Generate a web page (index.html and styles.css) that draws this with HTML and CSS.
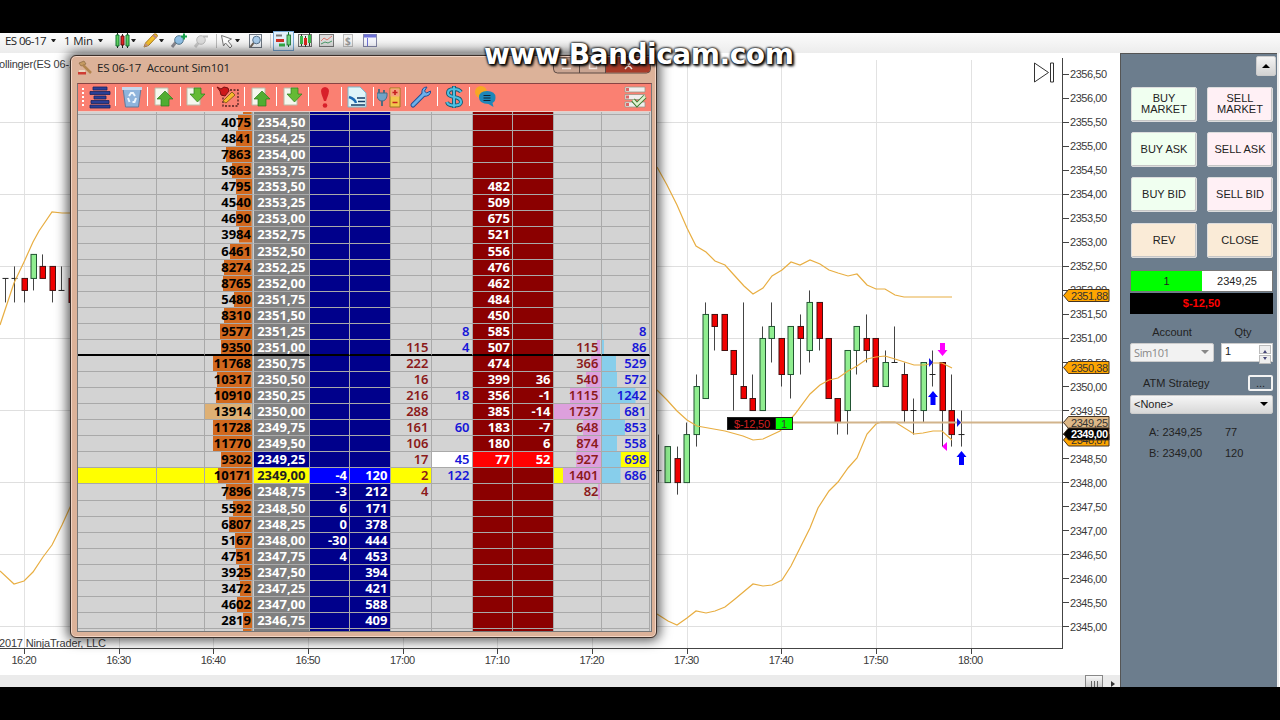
FILE: index.html
```html
<!DOCTYPE html>
<html>
<head>
  <meta charset="utf-8">
  <title>ES 06-17</title>
  <link rel="stylesheet" href="styles.css">
</head>
<body>

<div class="app">
  <!-- Top toolbar -->
  <div class="toolbar">
    <span class="instrument">ES 06-17</span>
    <i class="caret"></i>
    <span class="interval">1 Min</span>
    <i class="caret"></i>
    <svg class="icon" width="25" height="20" viewBox="107 31 25 20">
      <path d="M118.500 33v15M123.500 34v14M128.500 33v15" stroke="#222"/>
      <path d="M117 35h3v11h-3z" fill="#5fd35f" stroke="#173"/><path d="M122 36h3v9h-3z" fill="#e22" stroke="#611"/><path d="M127 35h3v11h-3z" fill="#5fd35f" stroke="#173"/>
    </svg>
    <i class="caret tight"></i>
    <svg class="icon" width="20" height="20" viewBox="139 31 20 20">
      <path d="M144 47l1.500-4 8.500-9q3-1 3.500 2l-9 9.500z" fill="#f4c02c" stroke="#a97a1c"/><path d="M153 35l3.500 3" stroke="#b88" stroke-width="2"/><path d="M144 47l1.500-4 3 2.500z" fill="#c98"/>
    </svg>
    <i class="caret tight"></i>
    <svg class="icon" width="24" height="20" viewBox="166 31 24 20">
      <path d="M176 42l-4 5" stroke="#8c8c94" stroke-width="3"/><circle cx="179" cy="40" r="4.300" fill="#8fc0e6" stroke="#54788f"/><path d="M181 36.500h6M184 33.500v6" stroke="#16a04a" stroke-width="2"/>
    </svg>
    <svg class="icon" width="28" height="20" viewBox="190 31 28 20">
      <path d="M199 42l-4 5" stroke="#c8c8c8" stroke-width="3"/><circle cx="201" cy="40" r="4.300" fill="#ddd" stroke="#bbb"/><path d="M203 36.500h5" stroke="#bbb" stroke-width="2"/><path d="M216.500 34v14" stroke="#bbb"/>
    </svg>
    <svg class="icon" width="17" height="20" viewBox="218 31 17 20">
      <path d="M221.500 35.500l10 3.500-3.500 2 4 5-2 2-4.500-5-2 3z" fill="#fff" stroke="#777"/>
    </svg>
    <i class="caret tight"></i>
    <svg class="icon" width="29" height="20" viewBox="243 31 29 20">
      <rect x="249.500" y="34.500" width="12" height="13" fill="#eef2f7" stroke="#6e7680"/><circle cx="256.500" cy="40" r="3.800" fill="#a8cbea" stroke="#57728c"/><path d="M253.500 43l-3 4" stroke="#6d6257" stroke-width="2"/><path d="M270.500 34v14" stroke="#ccc"/>
    </svg>
    <svg class="icon" width="23" height="20" viewBox="272 31 23 20">
      <rect x="273.500" y="31.500" width="20" height="19" fill="#e2f0fb" stroke="#77a8d6"/><path d="M276 35.500h6" stroke="#777" stroke-width="2"/><path d="M276 40.500h8" stroke="#cf3125" stroke-width="3"/><path d="M279 45h6" stroke="#34b04a" stroke-width="3"/><path d="M288.500 32v15" stroke="#176b29"/><rect x="287" y="35" width="3.500" height="10" fill="#6fd67c" stroke="#176b29" stroke-width=".8"/>
    </svg>
    <svg class="icon" width="22" height="20" viewBox="295 31 22 20">
      <rect x="298.500" y="34.500" width="13" height="12" fill="#ecece8" stroke="#737373"/><path d="M301.500 34v12M305.500 36v11M309.500 33v13" stroke="#333"/><path d="M300 36h3v8h-3zM308 35h3v8h-3z" fill="#3db84b"/><path d="M304 38h3v7h-3z" fill="#d9261f"/>
    </svg>
    <svg class="icon" width="24" height="20" viewBox="317 31 24 20">
      <rect x="319.500" y="34.500" width="14" height="12" fill="#ddd" stroke="#777"/><path d="M321 41l3-3 3 2 5-4" fill="none" stroke="#e07a70"/><path d="M321 44l4-2 3 1 4-2" fill="none" stroke="#4a9a68"/>
    </svg>
    <svg class="icon" width="19" height="20" viewBox="341 31 19 20">
      <rect x="343.500" y="34.500" width="9" height="12" fill="#f1f1f1" stroke="#bbb"/><text x="345" y="44.500" font-size="10" font-weight="bold" fill="#999">$</text>
    </svg>
    <svg class="icon" width="20" height="20" viewBox="360 31 20 20">
      <rect x="363.500" y="34.500" width="13" height="12" fill="#f5f6fc" stroke="#8487a8"/><path d="M364 36h12" stroke="#6e72d8" stroke-width="3"/><path d="M367.500 38v8" stroke="#6e72d8"/>
    </svg>
  </div>

  <div class="workspace">
    <div class="chart-side">
      <svg id="chart" class="chart" width="1120" height="622" viewBox="0 53 1120 622"></svg>
      <div class="scroll-strip"><span class="thumb"><i></i><i></i><i></i></span><i class="scroll-arrow"></i></div>
    </div>

    <!-- Chart trader panel -->
    <div class="trader">
      <div class="collapse"><button class="up-btn"><i></i></button></div>
      <div class="orders">
        <button class="buy">BUY<br>MARKET</button>
        <button class="sell">SELL<br>MARKET</button>
        <button class="buy">BUY ASK</button>
        <button class="sell">SELL ASK</button>
        <button class="buy">BUY BID</button>
        <button class="sell">SELL BID</button>
        <button class="flat">REV</button>
        <button class="flat">CLOSE</button>
      </div>
      <div class="position"><span class="size">1</span><span class="entry">2349,25</span></div>
      <div class="pnl">$-12,50</div>
      <div class="labels"><span class="account-label">Account</span><span class="qty-label">Qty</span></div>
      <div class="fields">
        <div class="account">Sim101<i class="down"></i></div>
        <div class="qty">1<span class="spin"><i class="up"></i><i class="down"></i></span></div>
      </div>
      <div class="atm"><span>ATM Strategy</span><button>...</button></div>
      <div class="strategy">&lt;None&gt;<i class="down"></i></div>
      <div class="quote"><span>A: 2349,25</span><span>77</span></div>
      <div class="quote"><span>B: 2349,00</span><span>120</span></div>
    </div>
  </div>

  <!-- Floating ladder window -->
  <div class="window">
    <div class="titlebar">
      <svg width="16" height="16" viewBox="0 0 16 16">
        <path d="M2 3l5-2 2 3-5 2z" fill="#c59a62" stroke="#8b6a45" stroke-width=".7"/><path d="M6 5l8 8" stroke="#b3854e" stroke-width="2.500"/><path d="M1 12h8v2.500H1z" fill="#cf3c33"/><path d="M2 10h6v2H2z" fill="#ead7c0"/>
      </svg>
      <span class="title">ES 06-17&nbsp; Account Sim101</span>
      <svg class="caption" width="98" height="17" viewBox="0 0 98 17">
        <path d="M.5 0v12q0 4 4 4h89q4 0 4-4V0z" fill="#c9a592" stroke="#5c4a44"/>
        <path d="M53 0h44v12q0 3.500-3.500 3.500H53z" fill="#a83a28"/>
        <path d="M26.500 0v16M52.500 0v16" stroke="#5c4a44"/>
        <path d="M9 11.500h9M36.500 5.500h7v6h-7zM72 4l7 8M79 4l-7 8" fill="none" stroke="#f4e6e0" stroke-width="1.500"/>
      </svg>
    </div>
    <div class="content">
      <div class="tools">
        <i class="grip"></i>
        <span><svg width="24" height="26" viewBox="0 0 24 26"><path d="M5 3h14v3H5zM2 7.500h20v3H2zM6 12h12v3H6zM3 16.500h18v3H3zM2 21h20v3H2z" fill="#2c3f96" stroke="#162460" stroke-width=".8"/></svg></span>
        <span><svg width="24" height="26" viewBox="0 0 24 26"><path d="M3 4h18l-2.500 19h-13z" fill="#8fb4dc" stroke="#5f7b9c"/><path d="M2 3h20v3H2z" fill="#c6d8ee"/><path d="M9 12l2-3h2l2 3M16 14l-1.500 4h-2M8 14l1.500 4" fill="none" stroke="#eef6fd" stroke-width="2"/></svg></span>
        <span><svg width="24" height="26" viewBox="0 0 24 26"><path d="M3 4h13v17H3z" fill="#f5f7ee" stroke="#b9bda8"/><path d="M13 7l8 8h-4v7H9v-7H5z" fill="#51ad31" stroke="#2b7d1d" stroke-width=".7"/></svg></span>
        <span><svg width="24" height="26" viewBox="0 0 24 26"><path d="M3 4h13v17H3z" fill="#f5f7ee" stroke="#b9bda8"/><path d="M10 4h7v6h4l-7.500 8L6 10h4z" fill="#65ba35" stroke="#2b7d1d" stroke-width=".7"/></svg></span>
        <span><svg width="24" height="26" viewBox="0 0 24 26"><path d="M7 6h15v16H7z" fill="none" stroke="#502020" stroke-width="1.300" stroke-dasharray="2 1.500"/><path d="M7 17l9-9 3 3-9 8z" fill="#f5b82d" stroke="#8f611a"/><path d="M1 3l4 2 3-2 4 1 1 3-4 5-4-1-1-4z" fill="#cd1719" stroke="#711"/></svg></span>
        <span><svg width="24" height="26" viewBox="0 0 24 26"><path d="M3 4h13v17H3z" fill="#f5f7ee" stroke="#b9bda8"/><path d="M13 7l8 8h-4v7H9v-7H5z" fill="#51ad31" stroke="#2b7d1d" stroke-width=".7"/></svg></span>
        <span><svg width="24" height="26" viewBox="0 0 24 26"><path d="M3 4h13v17H3z" fill="#f5f7ee" stroke="#b9bda8"/><path d="M10 4h7v6h4l-7.500 8L6 10h4z" fill="#65ba35" stroke="#2b7d1d" stroke-width=".7"/></svg></span>
        <span><svg width="24" height="26" viewBox="0 0 24 26"><path d="M12 3q5.500 1 3.500 7L13 17h-2L8.500 10Q6.500 4 12 3z" fill="#d8202a"/><circle cx="12" cy="21.500" r="2.300" fill="#d8202a"/></svg></span>
        <span><svg width="24" height="26" viewBox="0 0 24 26"><path d="M3 3h12l6 6v14H3z" fill="#dff5f9" stroke="#7eb9cc"/><path d="M12 14h8M13 17.500h7M6 21h14" stroke="#163d66" stroke-width="1.600"/><path d="M4 13q6 2 7 6" fill="none" stroke="#1c6ab4" stroke-width="2.500"/></svg></span>
        <span><svg width="24" height="26" viewBox="0 0 24 26"><path d="M2 5v5M7 6v5M5 16v6" stroke="#526b7d" stroke-width="2"/><path d="M0 9h10v3q-1 5-5 5t-5-5z" fill="#6fa3c7" stroke="#456c86"/><path d="M13 4h10v19H13z" fill="#f3c64b" stroke="#9a7a22"/><path d="M13.500 4.500h9v8h-9z" fill="#f6a27c"/><path d="M15.500 8.500h5M18 6v5M15.500 18.500h5" stroke="#c51f1f" stroke-width="1.600"/></svg></span>
        <span><svg width="24" height="26" viewBox="0 0 24 26"><path d="M4 21L15 10" stroke="#234f94" stroke-width="5" stroke-linecap="round"/><path d="M18 3q-6 0-5 7 2 4 7 1 2-2 1.500-4l-4 2-2-2z" fill="#6bb0ea" stroke="#234f94"/><path d="M4 21L15 10" stroke="#6bb0ea" stroke-width="3" stroke-linecap="round"/></svg></span>
        <span><svg width="24" height="26" viewBox="0 0 24 26"><path d="M19 8q-2-3-7-3-6 0-6 4 0 3 6 4 7 1 7 5 0 3.500-7 3.500-6 0-7-3.500M12 2v22" fill="none" stroke="#155870" stroke-width="4"/><path d="M19 8q-2-3-7-3-6 0-6 4 0 3 6 4 7 1 7 5 0 3.500-7 3.500-6 0-7-3.500M12 2.500v21" fill="none" stroke="#4cc0e2" stroke-width="2.200"/></svg></span>
        <span><svg width="26" height="26" viewBox="0 0 26 26"><circle cx="8" cy="8" r="6" fill="#f7a823"/><path d="M14 7q8.500 0 8.500 6.500 0 4-3 5.500l1 4-5-3q-9.500 0-9.500-6.500 0-6.500 8-6.500z" fill="#1e86b9"/><path d="M10.500 11.500h7M10.500 14h7M10.500 16.500h7" stroke="#123" stroke-width="1.100"/></svg></span>
        <svg class="checklist" width="24" height="24" viewBox="0 0 24 24"><path d="M1 2h20v5H1zM1 9.500h20v5H1zM1 17h20v5H1z" fill="#f1eeee" stroke="#998" stroke-width=".8"/><path d="M2 3h3v3H2zM2 10.500h3v3H2zM2 18h3v3H2z" fill="#d66"/><path d="M9 15l4 4.500 8-8" fill="none" stroke="#3e7b31" stroke-width="4.500"/><path d="M9 15l4 4.500 8-8" fill="none" stroke="#dff2cf" stroke-width="2.500"/></svg>
      </div>
      <div id="ladder" class="ladder"></div>
    </div>
  </div>

  <div class="watermark">www.Bandicam.com</div>
</div>

<script src="app.js"></script>
</body>
</html>
```

FILE: styles.css
```css
* {
  box-sizing: border-box;
}
body {
  margin: 0;
  padding: 33px 0;
  width: 1280px;
  height: 720px;
  background: #000;
  overflow: hidden;
  font-family: "Liberation Sans", Arial, sans-serif;
  font-size: 11px;
  color: #222;
}
svg {
  display: block;
  flex: none;
}
button {
  font-family: inherit;
  font-size: inherit;
  color: inherit;
  padding: 0;
}
.app {
  height: 654px;
  background: #fff;
}

/* top toolbar */
.toolbar {
  display: flex;
  align-items: center;
  height: 20px;
  padding: 0 0 5px 5px;
  background: linear-gradient(#fcfcfc, #ececec);
  font-family: "Open Sans", "Noto Sans", sans-serif;
  font-size: 11.5px;
  letter-spacing: -0.6px;
}
.instrument {
  width: 45px;
  white-space: nowrap;
}
.interval {
  width: 33px;
  margin-left: 7px;
  white-space: nowrap;
  letter-spacing: -0.2px;
}
.caret {
  width: 5px;
  margin: 0 1px;
  border: 2.5px solid transparent;
  border-top: 3px solid #222;
  border-bottom: 0;
}
.caret + .icon {
  margin-left: 2px;
}
.caret.tight {
  margin: 0 1px 0 0;
}
.caret.tight + .icon {
  margin-left: 1.6px;
}
.icon {
  overflow: visible;
}

.workspace {
  display: flex;
  height: 634px;
}
.chart-side {
  width: 1120px;
}
.chart text {
  font-size: 11px;
  fill: #3a3a3a;
}
.scroll-strip {
  display: flex;
  justify-content: flex-end;
  height: 12px;
  background: #ebebeb;
}
.thumb {
  display: flex;
  justify-content: center;
  gap: 2px;
  width: 18px;
  height: 12px;
  padding-top: 5px;
  border: 1px solid #888;
  border-bottom: 0;
  background: linear-gradient(#f8f8f8, #ccc);
}
.thumb i {
  width: 1px;
  background: #666;
}
.scroll-arrow {
  height: 6px;
  margin: 6px 5px 0 8px;
  border: 3px solid transparent;
  border-left: 4px solid #333;
  border-right: 0;
}

/* trader panel */
.trader {
  width: 159px;
  padding: 3px 4px 0 10px;
  background: #6c7d8d;
  border-left: 1px solid #555;
  border-right: 2px solid #eee;
  box-shadow: inset 0 1px #555;
}
.collapse {
  display: flex;
  justify-content: flex-end;
  margin-right: -3px;
}
.up-btn {
  display: flex;
  justify-content: center;
  align-items: center;
  width: 20px;
  height: 20px;
  border: 1px solid #ccc;
  border-radius: 2px;
  background: linear-gradient(#f4f4f4, #d2d2d2);
}
.up-btn i {
  border: 4px solid transparent;
  border-bottom: 4px solid #000;
  border-top: 0;
}
.orders {
  display: grid;
  grid-template-columns: 66px 66px;
  grid-auto-rows: 35px;
  gap: 10.4px 10px;
  margin-top: 10.6px;
}
.orders button {
  border: 1px solid #ddd;
  border-radius: 2px;
  box-shadow: inset -1px -1px #c6c6c6;
  line-height: 11px;
}
.buy {
  background: #f0fff0;
}
.sell {
  background: #fff0f5;
}
.flat {
  background: #faebd7;
}
.position {
  display: flex;
  height: 22px;
  width: 143px;
  margin: 12px 0 0 -1px;
  border: 1px solid #777;
  background: #fff;
  text-align: center;
  line-height: 20px;
}
.size {
  width: 71px;
  background: #0f0;
}
.entry {
  flex: 1;
}
.pnl {
  width: 143px;
  height: 21px;
  margin: 1px 0 0 -1px;
  background: #000;
  color: #f00;
  font-weight: bold;
  line-height: 21px;
  text-align: center;
}
.labels {
  display: flex;
  margin-top: 12px;
  line-height: 12px;
}
.account-label {
  width: 82px;
  text-align: center;
}
.qty-label {
  width: 60px;
  text-align: center;
}
.fields {
  display: flex;
  gap: 7px;
  margin: 5px 0 0 -1px;
}
.account,
.strategy {
  display: flex;
  align-items: center;
  justify-content: space-between;
  width: 84px;
  height: 19px;
  padding: 0 4px 0 3px;
  border: 1px solid #ccc;
  border-radius: 2px;
  background: #f2f2f2;
  color: #888;
}
.account {
  font-family: "Open Sans", sans-serif;
  letter-spacing: -0.4px;
}
.account i,
.strategy i {
  border: 4px solid transparent;
  border-top: 4px solid #888;
  border-bottom: 0;
}
.qty {
  display: flex;
  justify-content: space-between;
  width: 52px;
  height: 19px;
  padding: 1px 1px 1px 3px;
  background: #fff;
  border: 1px solid #ccc;
  line-height: 13px;
}
.spin {
  display: flex;
  flex-direction: column;
  gap: 1px;
}
.spin i {
  display: flex;
  justify-content: center;
  width: 12px;
  flex: 1;
  border: 1px solid #bbb;
  background: #eee;
}
.spin i::before {
  content: "";
  margin-top: 1px;
  height: 3px;
  border: 2px solid transparent;
}
.spin .up::before {
  border-top: 0;
  border-bottom: 3px solid #447;
}
.spin .down::before {
  border-bottom: 0;
  border-top: 3px solid #447;
}
.atm {
  display: flex;
  justify-content: space-between;
  align-items: center;
  width: 142px;
  height: 16px;
  margin-top: 13px;
  padding-left: 12px;
}
.atm button {
  width: 25px;
  height: 16px;
  border: 2px solid #f3f3f3;
  border-radius: 2px;
  background: #6c7d8d;
  line-height: 8px;
}
.strategy {
  width: 143px;
  height: 19px;
  margin: 4px 0 11px -1px;
  background: linear-gradient(#f6f6f6, #d8d8d8);
  color: #222;
}
.strategy i {
  border-top-color: #000;
}
.quote {
  display: flex;
  height: 21px;
  padding-left: 18px;
  line-height: 15px;
}
.quote span:first-child {
  width: 76px;
}

/* ladder window */
.window {
  position: absolute;
  left: 70px;
  top: 55px;
  width: 587px;
  height: 583px;
  padding: 1px 4px 5px 6px;
  border: 1px solid #3c302a;
  border-radius: 6px;
  background: #dcb299;
  box-shadow: inset 0 0 0 1px #f3d5c4, 0 0 12px 3px rgba(0, 0, 0, 0.65);
}
.titlebar {
  display: flex;
  align-items: center;
  height: 26px;
  padding-bottom: 5px;
  font-family: "Open Sans", "Noto Sans", sans-serif;
  font-size: 11.5px;
  letter-spacing: -0.2px;
}
.title {
  margin-left: 4px;
}
.caption {
  align-self: flex-start;
  margin-left: auto;
  margin-right: 1px;
}
.content {
  height: 549px;
  border: 1px solid #777;
  border-top-color: #844;
  overflow: hidden;
}
.tools {
  display: flex;
  align-items: center;
  height: 28px;
  padding: 0 0 2px 4px;
  background: #fa8072;
  border-bottom: 1px solid #e8cfc8;
}
.grip {
  width: 0;
  height: 18px;
  border-left: 2px dotted #fff;
}
.tools span {
  display: flex;
  justify-content: center;
  align-items: center;
  width: 32.2px;
  height: 19px;
  border-right: 1px solid #fff;
}
.tools span:last-of-type {
  border: 0;
}
.checklist {
  margin-left: auto;
  margin-right: 3px;
}
.ladder {
  height: 519px;
  background: #d3d3d3;
  font-family: "Noto Sans", "Open Sans", sans-serif;
  font-size: 13px;
  font-weight: bold;
}
.row {
  display: grid;
  grid-template-columns: 78.5px 48.5px 48px 56.5px 40.5px 40.5px 41px 41px 40.5px 40.5px 48px 48px;
  height: 16.065px;
  line-height: 14px;
  text-align: right;
}
.row.first {
  height: 3px;
}
.cell {
  height: 100%;
  padding-right: 2px;
  border-right: 1px solid #a9a9a9;
  border-bottom: 1px solid #a9a9a9;
  background-position: right;
  background-repeat: no-repeat;
  white-space: nowrap;
}
.row.open .cell {
  border-bottom: 2px solid #000;
}
.vol {
  color: #000;
  padding-right: 1px;
  background-image: linear-gradient(#d2691e, #d2691e);
}
.vol.peak {
  background-image: linear-gradient(#deb074, #deb074);
}
.price {
  padding-right: 3px;
  background: #808080;
  color: #fff;
  border-left: 1px solid #ccc;
}
.bid {
  background: #00008b;
  color: #fff;
}
.ask {
  background: #8b0000;
  color: #fff;
}
.sold,
.sold-sum {
  color: #8b1a1a;
  font-weight: 600;
}
.bought,
.bought-sum {
  color: #1616d8;
  font-weight: 600;
}
.sold-sum {
  background-image: linear-gradient(#dda0dd, #dda0dd);
}
.bought-sum {
  background-image: linear-gradient(#87ceeb, #87ceeb);
  background-position: left;
}
.last .blank,
.last .vol,
.last .price,
.last .sold,
.last .sold-sum {
  background-color: #ff0;
}
.last .price {
  color: #222;
}
.last .bid {
  background: #00f;
}
.inside .price {
  background: #00008b;
}
.inside .bought {
  background: #fff;
}
.inside .ask {
  background: #f00;
}
.inside .bought-sum {
  background-color: #ff0;
}

.watermark {
  position: absolute;
  left: 484px;
  top: 38px;
  font-family: "DejaVu Sans", sans-serif;
  font-size: 28px;
  font-weight: bold;
  line-height: 33px;
  letter-spacing: -0.45px;
  color: #fff;
  text-shadow: 0 0 3px #000, 1px 1px 3px #000, 2px 2px 3px #222, 0 0 2px #000;
}
```

FILE: app.js
```js
// volume, bid change, bid size, sold, bought, ask size, ask change, sold total, bought total
var rows = [
  [4075], [4841], [7863], [5863],
  [4795, '', '', '', '', 482], [4540, '', '', '', '', 509],
  [4690, '', '', '', '', 675], [3984, '', '', '', '', 521],
  [6461, '', '', '', '', 556], [8274, '', '', '', '', 476],
  [8765, '', '', '', '', 462], [5480, '', '', '', '', 484],
  [8310, '', '', '', '', 450],
  [9577, '', '', '', 8, 585, '', '', 8],
  [9350, '', '', 115, 4, 507, '', 115, 86],
  [11768, '', '', 222, '', 474, '', 366, 529],
  [10317, '', '', 16, '', 399, 36, 540, 572],
  [10910, '', '', 216, 18, 356, -1, 1115, 1242],
  [13914, '', '', 288, '', 385, -14, 1737, 681],
  [11728, '', '', 161, 60, 183, -7, 648, 853],
  [11770, '', '', 106, '', 180, 6, 874, 558],
  [9302, '', '', 17, 45, 77, 52, 927, 698],
  [10171, -4, 120, 2, 122, '', '', 1401, 686],
  [7896, -3, 212, 4, '', '', '', 82],
  [5592, 6, 171], [6807, 0, 378], [5167, -30, 444], [4751, 4, 453],
  [3925, '', 394], [3472, '', 421], [4602, '', 588], [2819, '', 409]
];

function price(p) {
  return p.toFixed(2).replace('.', ',');
}

function cell(name, value, bar) {
  var size = bar === undefined ? '' : ' style="background-size:' + bar.toFixed(1) + 'px 100%"';
  return '<div class="cell ' + name + '"' + size + '>' + (value === undefined ? '' : value) + '</div>';
}

function row(name, label, r) {
  return '<div class="row ' + name + '">' +
    cell('blank') + cell('blank') +
    cell(r[0] == 13914 ? 'vol peak' : 'vol', label ? r[0] : '', r[0] * 0.00335) +
    cell('price', label) +
    cell('bid', r[1]) + cell('bid', r[2]) +
    cell('sold', r[3]) + cell('bought', r[4]) +
    cell('ask', r[5]) + cell('ask', r[6]) +
    cell('sold-sum', r[7], (r[7] || 0) * 0.027) +
    cell('bought-sum', r[8], (r[8] || 0) * 0.027) +
    '</div>';
}

var names = { 14: 'open', 21: 'inside', 22: 'last' };
var html = row('first', '', [2600]);
rows.forEach(function (r, i) {
  html += row(names[i] || '', price(2354.5 - i * 0.25), r);
});
html += row('', '', [2600]);
document.getElementById('ladder').innerHTML = html;

// Chart: y is in ticks of 0.25 above 2348,00
function y(t) {
  return 482.6 - t * 12.01;
}
function x(m) {
  return 24 + m * 9.465;
}
function line(x1, y1, x2, y2, color, w) {
  return '<path d="M' + x1 + ' ' + y1 + 'L' + x2 + ' ' + y2 + '" stroke="' + color + '" stroke-width="' + (w || 1) + '"/>';
}

var svg = '';
var i;

for (i = 0; i <= 10; i++) {
  svg += line(Math.round(x(i * 10)) + 0.5, 60, Math.round(x(i * 10)) + 0.5, 648, '#e2e2e2');
}
for (i = -12; i <= 30; i += 6) {
  svg += line(0, Math.floor(y(i)) + 0.5, 1063, Math.floor(y(i)) + 0.5, '#dfdfdf');
}

// minutes after 16:20, open, high, low, close
var candles = [
  [-2, 17, 17, 15, 17], [-1, 17, 18, 15, 17], [0, 17, 17, 15, 16], [1, 17, 19, 16, 19],
  [2, 18, 19, 17, 17], [3, 18, 18, 15, 16], [4, 16, 18, 16, 16], [5, 17, 17, 15, 15],
  [67, 1, 4, 0, 1], [68, 0, 3, 0, 3], [69, 2, 3, -1, 0], [70, 0, 5, 0, 4],
  [71, 4, 9, 3, 8], [72, 7, 15, 7, 14], [73, 14, 14, 11, 13], [74, 14, 14, 11, 11],
  [75, 11, 11, 6, 9], [76, 8, 15, 7, 7], [77, 7, 9, 6, 6], [78, 6, 13, 6, 12],
  [79, 12, 15, 10, 13], [80, 12, 12, 8, 9], [81, 9, 13, 7, 13], [82, 13, 14, 9, 12],
  [83, 11, 16, 10, 15], [84, 15, 15, 11, 12], [85, 12, 12, 7, 7], [86, 7, 7, 4, 5],
  [87, 6, 11, 4, 11], [88, 11, 13, 9, 13], [89, 12, 14, 10, 11], [90, 12, 12, 8, 8],
  [91, 8, 11, 8, 10], [92, 10, 13, 10, 10], [93, 9, 10, 5, 6], [94, 6, 7, 4, 6],
  [95, 6, 10, 5, 10], [96, 9, 11, 8, 9], [97, 10, 10, 3, 6], [98, 6, 9, 3, 4],
  [99, 4, 6, 3, 4]
];
candles.forEach(function (c) {
  var cx = Math.floor(x(c[0])) + 0.5;
  svg += line(cx, y(c[2]), cx, y(c[3]), '#444');
  if (c[1] == c[4]) {
    svg += line(cx - 3, y(c[1]), cx + 3, y(c[1]), '#222');
    return;
  }
  var top = Math.max(c[1], c[4]);
  var low = Math.min(c[1], c[4]);
  svg += '<rect x="' + (cx - 2.5) + '" y="' + y(top) + '" width="5.500" height="' + (y(low) - y(top)) +
    '" fill="' + (c[4] > c[1] ? '#90ee90' : '#f00000') + '" stroke="' + (c[4] > c[1] ? '#253' : '#411') + '"/>';
});

// Bollinger bands
[
  '0,325 14,283 24,262 33,242 39,231 52,212 62,213 72,213',
  '0,571 14,584 24,581 33,572 43,557 52,545 62,525 72,503',
  '657,167 667,185 677,205 687,228 696,246 706,252 715,261 725,265 734,275 744,286 753,294 763,288 772,276 782,270 791,262 800,265 810,260 820,264 829,270 838,273 848,276 857,274 867,285 876,289 885,289 895,295 904,297 952,297',
  '657,390 667,400 677,411 687,420 697,426 725,431 743,436 753,440 763,439 780,431 795,414 810,394 820,385 829,380 838,378 848,371 857,366 867,359 876,357 885,356 895,359 914,365 925,365 933,363 942,363 952,368',
  '657,614 668,621 677,625 687,618 696,611 706,613 715,611 725,607 735,599 753,584 763,586 772,585 782,580 791,566 800,548 810,528 818,508 829,491 838,482 848,468 857,458 867,434 876,424 881,422 895,422 914,434 923,433 933,431 942,431 952,440'
].forEach(function (points) {
  svg += '<polyline points="' + points + '" fill="none" stroke="#e8ae42" stroke-width="1.200"/>';
});

// Entry line and order marker
svg += line(793, 422.5, 1064, 422.5, '#d2b48c', 2);
svg += '<rect x="727.500" y="417.500" width="48" height="12" fill="#000" stroke="#222"/><text x="734" y="427.500" textLength="36" style="fill:#d02020">$-12,50</text>';
svg += '<rect x="775.500" y="417.500" width="17" height="12" fill="#0f0" stroke="#222"/><text x="781" y="427.500">1</text>';

// Executions
svg += '<path d="M940 343h5v7h2.500l-5 6-5-6h2.500z" fill="#f0f"/>';
svg += '<path d="M933 391l5 6h-2.500v8h-5v-8h-2.500zM961.500 451l5 6H964v8h-5v-8h-2.500z" fill="#00f"/>';
svg += '<path d="M929 358l4 4.500-4 4.500zM957 418l4 4.500-4 4.500z" fill="#1616e0"/><path d="M947 442v9l-5-4.500z" fill="#f0f"/>';

// Axes
svg += line(0, 648.5, 1063, 648.5, '#444') + line(1062.5, 58, 1062.5, 649, '#444');
for (i = 0; i <= 10; i++) {
  var h = 16 + Math.floor((20 + i * 10) / 60);
  var m = (20 + i * 10) % 60;
  svg += line(Math.round(x(i * 10)) + 0.5, 649, Math.round(x(i * 10)) + 0.5, 654, '#444');
  svg += '<text x="' + x(i * 10) + '" y="664" text-anchor="middle" textLength="25">' + h + ':' + (m < 10 ? '0' : '') + m + '</text>';
}
for (i = -12; i <= 34; i += 2) {
  svg += line(1063, Math.floor(y(i)) + 0.5, 1069, Math.floor(y(i)) + 0.5, '#444');
  svg += '<text x="1070" y="' + (y(i) + 4) + '" textLength="37">' + price(2348 + i / 4) + '</text>';
}
function tag(ty, value, fill, color, weight) {
  svg += '<path d="M1063.500 ' + ty + 'l5-6h40.500v12h-40.500z" fill="' + fill + '" stroke="#432"/>' +
    '<text x="1071" y="' + (ty + 4) + '" textLength="37" style="fill:' + color + ';font-weight:' + weight + '">' + value + '</text>';
}
tag(295.5, '2351,88', '#ffa500', '#333', 'normal');
tag(367.5, '2350,38', '#ffa500', '#333', 'normal');
tag(440, '2348,87', '#ffa500', '#333', 'normal');
tag(422.5, '2349,25', '#deb887', '#333', 'normal');
tag(434, '2349,00', '#000', '#fff', 'bold');

// Go-to-end button
svg += '<path d="M1034.500 63v19l14-9.500zM1050.500 63h3v19h-3z" fill="#fff" stroke="#333"/>';
svg += '<text x="-1" y="68" textLength="76">ollinger(ES 06-1</text><text x="-1" y="647" textLength="107">2017 NinjaTrader, LLC</text>';

document.getElementById('chart').innerHTML = svg;
```
